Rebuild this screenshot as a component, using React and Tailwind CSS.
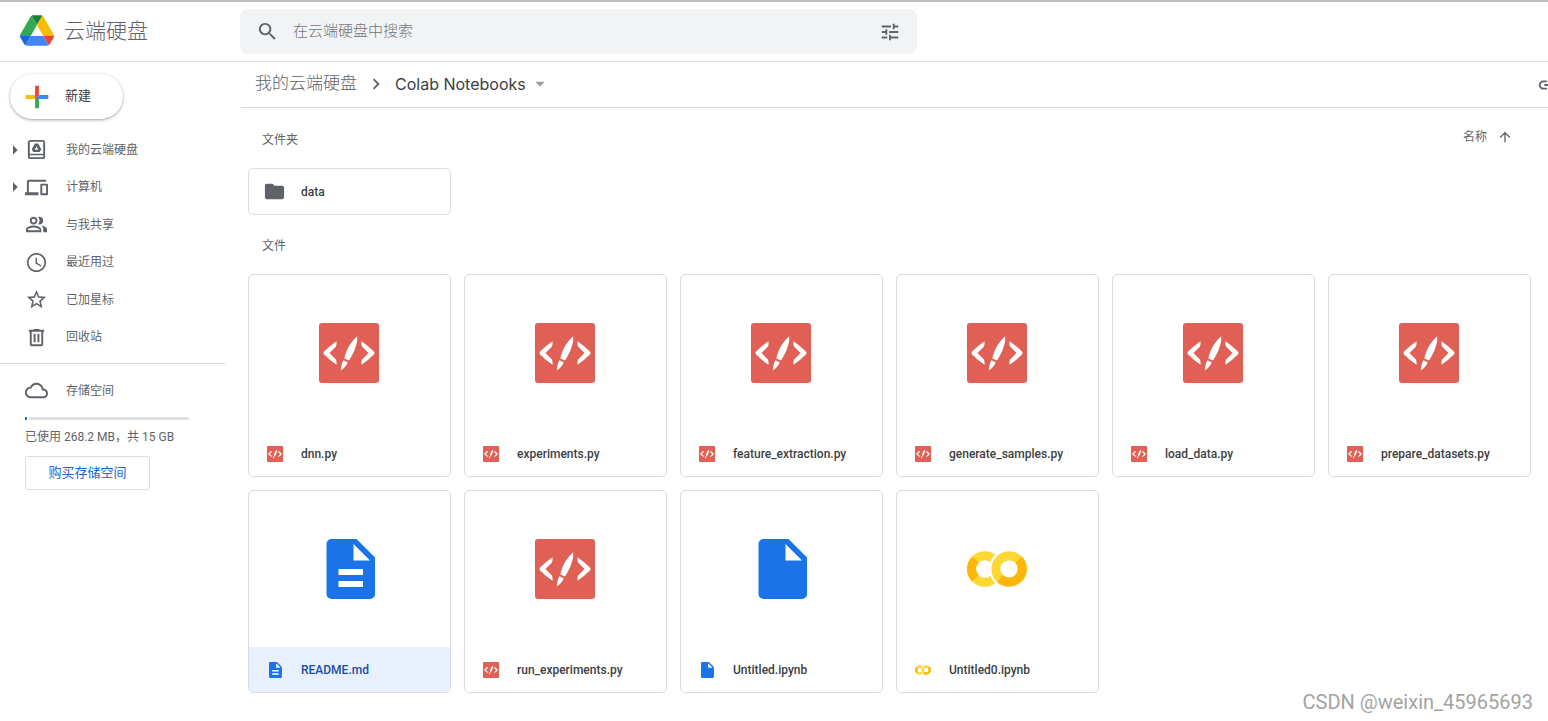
const PATHS = {
  search:
    'M15.5 14h-.79l-.28-.27C15.41 12.59 16 11.11 16 9.5 16 5.91 13.09 3 9.5 3S3 5.91 3 9.5 5.91 16 9.5 16c1.61 0 3.09-.59 4.23-1.57l.27.28v.79l5 4.99L20.49 19l-4.99-5zm-6 0C7.01 14 5 11.99 5 9.5S7.01 5 9.5 5 14 7.01 14 9.5 11.99 14 9.5 14z',
  tune: 'M3 17v2h6v-2H3zM3 5v2h10V5H3zm10 16v-2h8v-2h-8v-2h-2v6h2zM7 9v2H3v2h4v2h2V9H7zm14 4v-2H11v2h10zm-6-4h2V7h4V5h-4V3h-2v6z',
  caretRight: 'M9 19l7-7-7-7v14z',
  caretDown: 'M7 9.5l5 5.5 5-5.5H7z',
  chevron: 'M10 6L8.59 7.41 13.17 12l-4.58 4.59L10 18l6-6z',
  drive:
    'M18.5 2h-13C4.1 2 3 3.1 3 4.5v15C3 20.9 4.1 22 5.5 22h13c1.4 0 2.5-1.1 2.5-2.5v-15C21 3.1 19.9 2 18.5 2zM5 4h14v12.5H5V4zm0 14h14v2H5v-2zM10.3 5.8L7 11.8l1.6 2.9h6.8l1.6-2.9-3.3-6h-3.4zM12 8.8l1.9 3.4h-3.8L12 8.8z',
  devices:
    'M4 6h18V4H4c-1.1 0-2 .9-2 2v11H0v3h14v-3H4V6zm19 2h-6c-.55 0-1 .45-1 1v10c0 .55.45 1 1 1h6c.55 0 1-.45 1-1V9c0-.55-.45-1-1-1zm-1 10h-4v-8h4v8z',
  people:
    'M16.67 13.13C18.04 14.06 19 15.32 19 17v3h4v-3c0-2.18-3.57-3.47-6.33-3.87zM15 12c2.21 0 4-1.79 4-4s-1.79-4-4-4c-.47 0-.91.1-1.33.24a5.98 5.98 0 0 1 0 7.52c.42.14.86.24 1.33.24zM9 12c2.21 0 4-1.79 4-4s-1.79-4-4-4-4 1.79-4 4 1.79 4 4 4zm0-6c1.1 0 2 .9 2 2s-.9 2-2 2-2-.9-2-2 .9-2 2-2zM9 13c-2.67 0-8 1.34-8 4v3h16v-3c0-2.66-5.33-4-8-4zm6 5H3v-.99C3.2 16.29 6.3 15 9 15s5.8 1.29 6 2v1z',
  clock:
    'M12 2C6.48 2 2 6.48 2 12s4.48 10 10 10 10-4.48 10-10S17.52 2 12 2zm0 18.2c-4.53 0-8.2-3.67-8.2-8.2S7.47 3.8 12 3.8s8.2 3.67 8.2 8.2-3.67 8.2-8.2 8.2zM12.5 7H11v6l5.25 3.15.75-1.23-4.5-2.67z',
  star: 'M22 9.24l-7.19-.62L12 2 9.19 8.63 2 9.24l5.46 4.73L5.82 21 12 17.27 18.18 21l-1.63-7.03L22 9.24zM12 15.4l-3.76 2.27 1-4.28-3.32-2.88 4.38-.38L12 6.1l1.71 4.04 4.38.38-3.32 2.88 1 4.28L12 15.4z',
  trash:
    'M15 4V3H9v1H4v2h1v13c0 1.1.9 2 2 2h10c1.1 0 2-.9 2-2V6h1V4h-5zm2 15H7V6h10v13zM9 8h2v9H9zm4 0h2v9h-2z',
  cloud:
    'M19.35 10.04C18.67 6.59 15.64 4 12 4 9.11 4 6.6 5.64 5.35 8.04 2.34 8.36 0 10.91 0 14c0 3.31 2.69 6 6 6h13c2.76 0 5-2.24 5-5 0-2.64-2.05-4.78-4.65-4.96zM19 18H6c-2.21 0-4-1.79-4-4 0-2.05 1.53-3.76 3.56-3.97l1.07-.11.5-.95C8.08 7.14 9.94 6 12 6c2.62 0 4.88 1.86 5.39 4.43l.3 1.5 1.53.11c1.56.1 2.78 1.41 2.78 2.96 0 1.65-1.35 3-3 3z',
  folder: 'M10 4H4c-1.1 0-1.99.9-1.99 2L2 18c0 1.1.9 2 2 2h16c1.1 0 2-.9 2-2V8c0-1.1-.9-2-2-2h-8l-2-2z',
  up: 'M4 12l1.41 1.41L11 7.83V20h2V7.83l5.58 5.59L20 12l-8-8-8 8z',
  link: 'M3.9 12c0-1.71 1.39-3.1 3.1-3.1h4V7H7c-2.76 0-5 2.24-5 5s2.24 5 5 5h4v-1.9H7c-1.71 0-3.1-1.39-3.1-3.1zM8 13h8v-2H8v2zm9-6h-4v1.9h4c1.71 0 3.1 1.39 3.1 3.1s-1.39 3.1-3.1 3.1h-4V17h4c2.76 0 5-2.24 5-5s-2.24-5-5-5z',
};

function Icon({ name, className }) {
  return (
    <svg viewBox="0 0 24 24" fill="currentColor" fillRule="evenodd" aria-hidden="true" className={`shrink-0 ${className}`}>
      <path d={PATHS[name]} />
    </svg>
  );
}

function DriveLogo() {
  return (
    <svg viewBox="0 0 87.3 78" aria-hidden="true" className="h-[31px] w-[34px] shrink-0">
      <path fill="#1967d2" d="m6.6 66.85 3.85 6.65c.8 1.4 1.95 2.5 3.3 3.3l13.75-23.8h-27.5c0 1.55.4 3.1 1.2 4.5z" />
      <path fill="#34a853" d="m43.65 25-13.75-23.8c-1.35.8-2.5 1.9-3.3 3.3l-25.4 44a9.06 9.06 0 0 0-1.2 4.5h27.5z" />
      <path fill="#ea4335" d="m73.55 76.8c1.35-.8 2.5-1.9 3.3-3.3l1.6-2.75 7.65-13.25c.8-1.4 1.2-2.95 1.2-4.5h-27.5z" />
      <path fill="#188038" d="m43.65 25 13.75-23.8c-1.35-.8-2.9-1.2-4.5-1.2h-18.5c-1.6 0-3.15.45-4.5 1.2z" />
      <path fill="#4285f4" d="m59.8 53h-32.3l-13.75 23.8c1.35.8 2.9 1.2 4.5 1.2h50.8c1.6 0 3.15-.45 4.5-1.2z" />
      <path fill="#fbbc04" d="m73.4 26.5-12.7-22c-.8-1.4-1.95-2.5-3.3-3.3l-13.75 23.8 16.15 28h27.45c0-1.55-.4-3.1-1.2-4.5z" />
    </svg>
  );
}

function PlusIcon() {
  return (
    <svg viewBox="0 0 36 36" aria-hidden="true" className="size-[34px] shrink-0">
      <path fill="#34a853" d="M16 16v14h4V20z" />
      <path fill="#4285f4" d="M30 16H20l-4 4h14z" />
      <path fill="#fbbc04" d="M6 16v4h10l4-4z" />
      <path fill="#ea4335" d="M20 16V6h-4v14z" />
    </svg>
  );
}

function FileIcon({ kind, className }) {
  if (kind === 'code') {
    return (
      <svg viewBox="0 0 60 60" aria-hidden="true" className={`shrink-0 ${className}`}>
        <rect width="60" height="60" rx="3" fill="#e06055" />
        <g fill="#fff">
          <path d="M17.5 18.2Q17.8 21.500 17 23.500L10.500 30l6.500 6.500q.8 2 .5 5.300Q11 37.500 4.600 31v-2Q11 22.500 17.500 18.200z" />
          <path d="M42.500 18.200Q42.200 21.500 43 23.500l6.500 6.500-6.500 6.500q-.8 2-.5 5.300Q49 37.500 55.400 31v-2Q49 22.500 42.500 18.200z" />
          <path d="M38.3 13.3c.4 7.2-3 16.3-8.3 24.2l-4.7-1.9c2.2-9.4 6.8-17.6 13-22.3z" />
          <path d="M24.3 37.2l4.4 2c-1.2 3.6-3.6 6-6.7 8 .1-3.6.7-6.9 2.3-10z" />
        </g>
      </svg>
    );
  }
  if (kind === 'colab') {
    return (
      <svg viewBox="0 0 60 60" aria-hidden="true" fill="none" strokeWidth="9" className={`shrink-0 ${className}`}>
        <circle cx="17.8" cy="30" r="13.3" stroke="#fdd835" />
        <path stroke="#ffb60a" d="M8.4 20.6a13.3 13.3 0 0 0 0 18.8" />
        <circle cx="42.2" cy="30" r="20" fill="#fff" />
        <circle cx="42.2" cy="30" r="13.3" stroke="#fdd835" />
        <path stroke="#ffb60a" d="M51.6 20.6a13.3 13.3 0 0 1-18.8 18.8" />
      </svg>
    );
  }
  return (
    <svg viewBox="0 0 60 60" aria-hidden="true" className={`shrink-0 ${className}`}>
      <path
        fill="#1a73e8"
        d="M37.5 0H12.5a5 5 0 0 0-5 5v50a5 5 0 0 0 5 5h38.5a5 5 0 0 0 5-5V18.5z"
      />
      <path fill="#fff" d="M34.5 5v16.5H51z" />
      {kind === 'doc' && <path fill="#fff" d="M19.5 30H44v6H19.5zM19.5 42H44v6H19.5z" />}
    </svg>
  );
}

const NAV = [
  { icon: 'drive', label: '我的云端硬盘', expandable: true },
  { icon: 'devices', label: '计算机', expandable: true },
  { icon: 'people', label: '与我共享' },
  { icon: 'clock', label: '最近用过' },
  { icon: 'star', label: '已加星标' },
  { icon: 'trash', label: '回收站' },
];

const FILES = [
  { name: 'dnn.py', kind: 'code' },
  { name: 'experiments.py', kind: 'code' },
  { name: 'feature_extraction.py', kind: 'code' },
  { name: 'generate_samples.py', kind: 'code' },
  { name: 'load_data.py', kind: 'code' },
  { name: 'prepare_datasets.py', kind: 'code' },
  { name: 'README.md', kind: 'doc', selected: true },
  { name: 'run_experiments.py', kind: 'code' },
  { name: 'Untitled.ipynb', kind: 'file' },
  { name: 'Untitled0.ipynb', kind: 'colab' },
];

function NavItem({ icon, label, expandable }) {
  return (
    <li className="flex flex-1 items-center">
      <a href="#" className="flex items-center">
        <span className="flex w-[25px] justify-center pl-1">
          {expandable && <Icon name="caretRight" className="size-4" />}
        </span>
        <Icon name={icon} className="size-[23px]" />
        <span className="pl-[18px] text-xs">{label}</span>
      </a>
    </li>
  );
}

function Sidebar() {
  return (
    <aside className="flex w-60 shrink-0 flex-col pt-3">
      <button
        type="button"
        className="ml-[10px] flex h-[45px] w-[113px] items-center rounded-full bg-white pl-[10px] text-[13px] text-[#3c4043] shadow-[0_1px_2px_rgba(60,64,67,0.30),0_1px_3px_1px_rgba(60,64,67,0.15)]"
      >
        <PlusIcon />
        <span className="pb-[2px] pl-[11px]">新建</span>
      </button>
      <nav className="mt-3">
        <ul className="flex h-[225px] flex-col">
          {NAV.map((item) => (
            <NavItem key={item.label} {...item} />
          ))}
        </ul>
      </nav>
      <section className="mt-[7px] mr-[15px] border-t border-[#dadce0] pt-[15px] pl-[25px]">
        <a href="#" className="flex items-center">
          <Icon name="cloud" className="size-[23px]" />
          <span className="pl-[18px] text-xs">存储空间</span>
        </a>
        <div className="mt-[15px] mr-9 flex h-[3px] gap-[2px]">
          <div className="w-[2px] bg-[#1a73e8]" />
          <div className="flex-1 rounded-r-sm bg-[#e0e0e0]" />
        </div>
        <p className="mt-[7px] text-xs leading-5">已使用 268.2 MB，共 15 GB</p>
        <button
          type="button"
          className="mt-[9px] h-[34px] w-[125px] rounded-[3px] border border-[#dadce0] text-[13px] text-[#1967d2]"
        >
          购买存储空间
        </button>
      </section>
    </aside>
  );
}

function FileCard({ name, kind, selected }) {
  return (
    <li className="flex aspect-square flex-col overflow-hidden rounded-[5px] border border-[#dadce0]">
      <div className="flex flex-1 items-center justify-center pr-px">
        <FileIcon kind={kind} className="size-[60px]" />
      </div>
      <div className={`flex h-[45px] items-center pl-[18px] ${selected ? 'bg-[#e8f0fe] text-[#174ea6]' : ''}`}>
        <FileIcon kind={kind} className="size-4" />
        <span className="truncate pl-[18px] text-xs font-medium">{name}</span>
      </div>
    </li>
  );
}

export default function App() {
  return (
    <div className="flex min-h-screen flex-col overflow-hidden border-t-2 border-[#bdbdc1] bg-white font-['Roboto','Noto_Sans_CJK_SC',sans-serif] text-[#5f6368]">
      <header className="flex h-[60px] items-center border-b border-[#dadce0]">
        <a href="#" className="flex w-60 shrink-0 items-start pb-[2px] pl-5">
          <DriveLogo />
          <span className="pl-[10px] font-['Noto_Sans_CJK_SC',sans-serif] text-[21px] leading-7 font-light">云端硬盘</span>
        </a>
        <label className="flex h-[45px] w-full max-w-[677px] items-center rounded-lg bg-[#f1f3f4] pr-4 pl-4">
          <Icon name="search" className="size-[23px]" />
          <input
            type="search"
            aria-label="在云端硬盘中搜索"
            placeholder="在云端硬盘中搜索"
            className="min-w-0 flex-1 bg-transparent pl-[14px] text-[15px] font-light outline-none placeholder:text-[#717579]"
          />
          <button type="button" aria-label="搜索选项">
            <Icon name="tune" className="size-[22px]" />
          </button>
        </label>
      </header>

      <div className="flex flex-1">
        <Sidebar />
        <main className="min-w-0 flex-1">
          <div className="ml-px flex h-[46px] items-center border-b border-[#dadce0] pl-[14px]">
            <nav className="flex flex-1 items-center pb-[2px] text-[17px]">
              <a href="#" className="font-light">我的云端硬盘</a>
              <Icon name="chevron" className="mx-2 size-[22px]" />
              <button type="button" className="flex items-center font-['Inter',sans-serif] text-[16px] text-[#3c4043]">
                Colab Notebooks
                <Icon name="caretDown" className="ml-[3px] size-[22px] text-[#9aa0a6]" />
              </button>
            </nav>
            <button type="button" aria-label="获取链接" className="-mr-[11px]">
              <Icon name="link" className="size-[22px]" />
            </button>
          </div>

          <div className="pr-[17px] pb-7 pl-2 text-[#3c4043]">
            <div className="flex h-[60px] items-center justify-between pr-[18px] pl-[14px] text-xs text-[#5f6368]">
              <h2 className="pt-1">文件夹</h2>
              <button type="button" className="flex items-center gap-[10px] pb-[2px]">
                名称
                <Icon name="up" className="size-4" />
              </button>
            </div>
            <ul className="grid grid-cols-[repeat(auto-fill,minmax(180px,1fr))] gap-[13px]">
              <li className="flex h-[47px] items-center rounded-[5px] border border-[#dadce0] pl-[14px]">
                <Icon name="folder" className="size-[23px] text-[#5f6368]" />
                <span className="pl-[15px] text-xs font-medium">data</span>
              </li>
            </ul>
            <h2 className="flex h-[59px] items-center pt-[2px] pl-[14px] text-xs text-[#5f6368]">文件</h2>
            <ul className="grid grid-cols-[repeat(auto-fill,minmax(180px,1fr))] gap-[13px]">
              {FILES.map((file) => (
                <FileCard key={file.name} {...file} />
              ))}
            </ul>
          </div>
        </main>
      </div>

      <p className="pointer-events-none absolute right-[15px] bottom-[7px] font-['Roboto',sans-serif] text-[20px] leading-6 text-[#a3a3a3]">
        CSDN @weixin_45965693
      </p>
    </div>
  );
}
